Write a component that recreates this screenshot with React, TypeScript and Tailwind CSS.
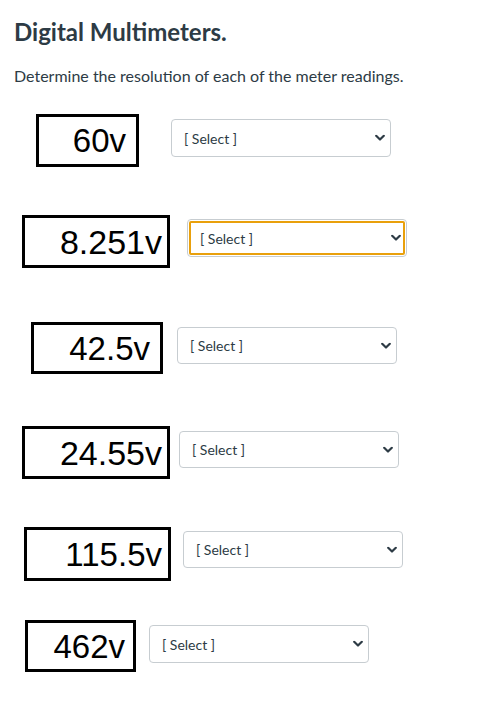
import React from "react";

type Reading = {
  value: string;
  boxClass: string;
  textClass: string;
  selectClass: string;
  focused?: boolean;
};

const readings: Reading[] = [
  { value: "60v", boxClass: "ml-[36px] w-[103px] h-[53px] pr-[10px]", textClass: "text-[33px]", selectClass: "ml-[32px] mt-[5px] w-[220px] h-[38px]" },
  { value: "8.251v", boxClass: "ml-[22px] w-[148px] h-[53px] pr-[5px]", textClass: "text-[34px]", selectClass: "ml-[17px] mt-[4px] w-[220px] h-[38px]", focused: true },
  { value: "42.5v", boxClass: "ml-[31px] w-[132px] h-[52px] pr-[10px]", textClass: "text-[33px]", selectClass: "ml-[14px] mt-[5px] w-[220px] h-[37px]" },
  { value: "24.55v", boxClass: "ml-[22px] w-[148px] h-[53px] pr-[5px]", textClass: "text-[34px]", selectClass: "ml-[9px] mt-[5px] w-[220px] h-[37px]" },
  { value: "115.5v", boxClass: "ml-[24px] w-[147px] h-[54px] pr-[6px]", textClass: "text-[33px]", selectClass: "ml-[12px] mt-[4px] w-[220px] h-[37px]" },
  { value: "462v", boxClass: "ml-[25px] w-[111px] h-[52px] pr-[8px]", textClass: "text-[33px]", selectClass: "ml-[13px] mt-[5px] w-[220px] h-[38px]" },
];

const gaps = ["mt-[28px]", "mt-[48px]", "mt-[54px]", "mt-[52px]", "mt-[48px]", "mt-[39px]"];

const Chevron = () => (
  <svg className="absolute right-[6px] top-1/2 -translate-y-1/2 pointer-events-none" width="10" height="7" viewBox="0 0 10 7">
    <path d="M1.2 1.3 L5 5 L8.8 1.3" fill="none" stroke="#2d3b45" strokeWidth="2.2" strokeLinecap="round" strokeLinejoin="round" />
  </svg>
);

const Row = ({ r, gap }: { r: Reading; gap: string }) => (
  <div className={`flex items-start ${gap}`}>
    <div className={`flex items-center justify-end border-[3px] border-black bg-white ${r.boxClass}`}>
      <span className={`font-['Liberation_Sans',Arial,sans-serif] leading-none text-black ${r.textClass}`}>{r.value}</span>
    </div>
    <div className={`relative ${r.selectClass}`}>
      <select
        defaultValue=""
        className={`w-full h-full appearance-none rounded-[4px] border border-[#c7cdd1] bg-white pl-[12px] text-[14px] text-[#2d3b45] font-['Lato',sans-serif] ${
          r.focused ? "outline-2 outline-solid outline-[#e9a00c] outline-offset-[-4px]" : "outline-none"
        }`}
      >
        <option value="">[ Select ]</option>
      </select>
      <Chevron />
    </div>
  </div>
);

export default function App() {
  return (
    <div className="w-[501px] min-h-[704px] bg-white text-[#2d3b45] font-['Lato',sans-serif]">
      <div className="pl-[14px] pt-[18px]">
        <h1 className="text-[24px] leading-[28px] font-bold">Digital Multimeters.</h1>
        <p className="mt-[20px] text-[16px] leading-[20px]">Determine the resolution of each of the meter readings.</p>
      </div>
      {readings.map((r, i) => (
        <Row key={i} r={r} gap={gaps[i]} />
      ))}
    </div>
  );
}
